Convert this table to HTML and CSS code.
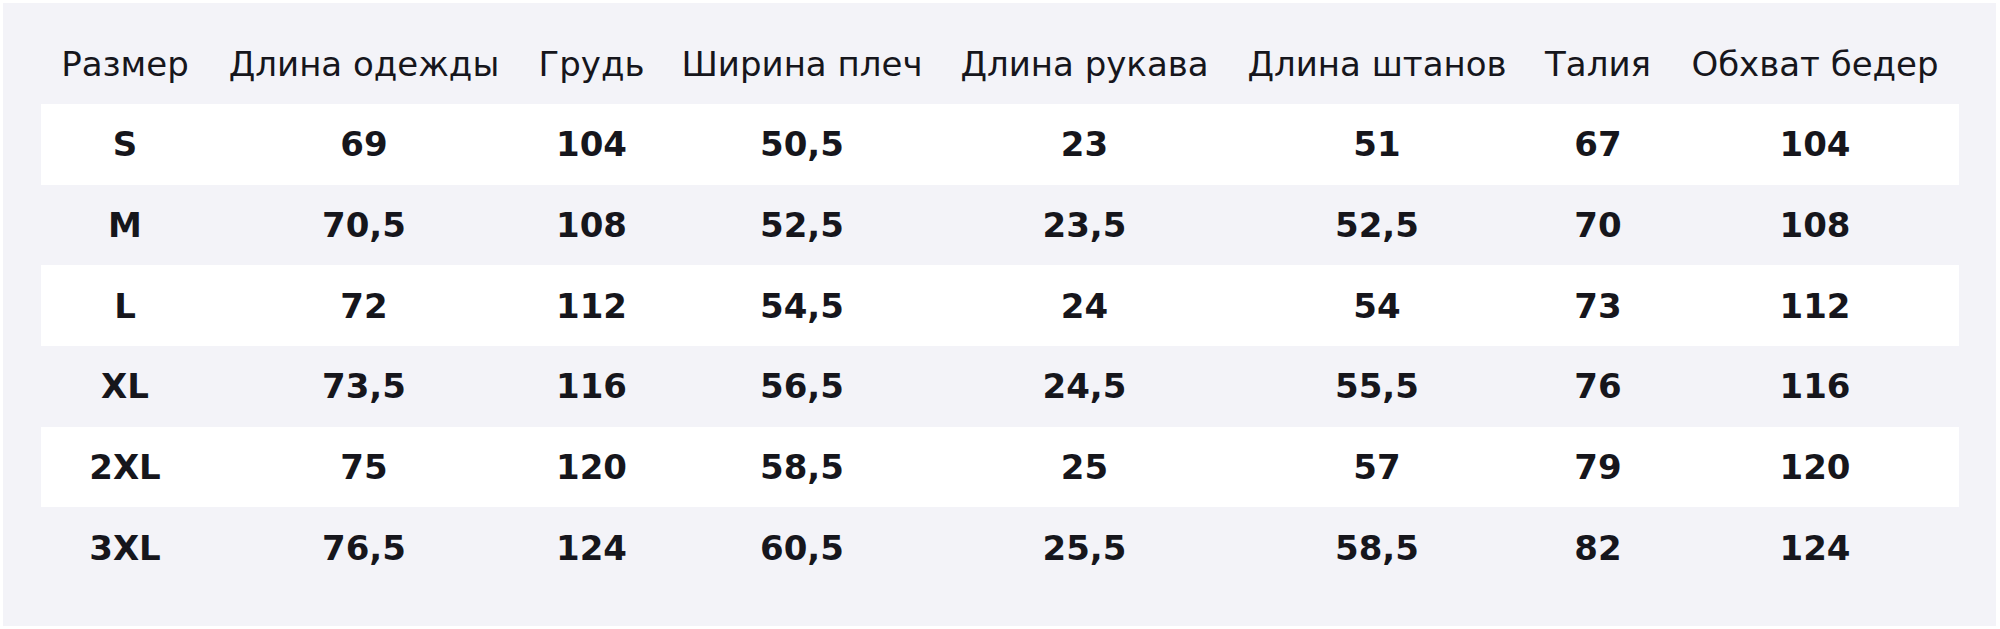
FILE: index.html
```html
<!DOCTYPE html>
<html lang="ru">
<head>
<meta charset="utf-8">
<title>Таблица размеров</title>
<link rel="stylesheet" href="styles.css">
</head>
<body>
<div class="panel">
  <table class="sizes">
    <colgroup>
      <col class="c-size">
      <col class="c-length">
      <col class="c-chest">
      <col class="c-shoulder">
      <col class="c-sleeve">
      <col class="c-pants">
      <col class="c-waist">
      <col class="c-hips">
    </colgroup>
    <thead>
      <tr>
        <th>Размер</th>
        <th>Длина одежды</th>
        <th>Грудь</th>
        <th>Ширина плеч</th>
        <th>Длина рукава</th>
        <th>Длина штанов</th>
        <th>Талия</th>
        <th>Обхват бедер</th>
      </tr>
    </thead>
    <tbody>
      <tr class="odd"><td>S</td><td>69</td><td>104</td><td>50,5</td><td>23</td><td>51</td><td>67</td><td>104</td></tr>
      <tr><td>M</td><td>70,5</td><td>108</td><td>52,5</td><td>23,5</td><td>52,5</td><td>70</td><td>108</td></tr>
      <tr class="odd"><td>L</td><td>72</td><td>112</td><td>54,5</td><td>24</td><td>54</td><td>73</td><td>112</td></tr>
      <tr><td>XL</td><td>73,5</td><td>116</td><td>56,5</td><td>24,5</td><td>55,5</td><td>76</td><td>116</td></tr>
      <tr class="odd"><td>2XL</td><td>75</td><td>120</td><td>58,5</td><td>25</td><td>57</td><td>79</td><td>120</td></tr>
      <tr><td>3XL</td><td>76,5</td><td>124</td><td>60,5</td><td>25,5</td><td>58,5</td><td>82</td><td>124</td></tr>
    </tbody>
  </table>
</div>
</body>
</html>
```

FILE: styles.css
```css
html, body {
  margin: 0;
  padding: 0;
  background: #ffffff;
}

body {
  font-family: "DejaVu Sans", "Noto Sans", sans-serif;
  color: #16161c;
}

.panel {
  margin: 3px 4px 3px 3px;
  padding: 38px 37px 38px 38px;
  background: #f3f3f8;
}

.sizes {
  width: 1918px;
  table-layout: fixed;
  border-collapse: collapse;
  border-spacing: 0;
  font-size: 34px;
  line-height: 40px;
}

.c-size { width: 168px; }
.c-length { width: 310px; }
.c-chest { width: 145px; }
.c-shoulder { width: 276px; }
.c-sleeve { width: 289px; }
.c-pants { width: 296px; }
.c-waist { width: 146px; }
.c-hips { width: 288px; }

.sizes th {
  font-weight: normal;
  text-align: center;
  white-space: nowrap;
  padding: 3px 0 20px;
}

.sizes td {
  font-weight: bold;
  text-align: center;
  white-space: nowrap;
  padding: 20.33px 0;
}

.sizes tr.odd td {
  background: #ffffff;
}
```
